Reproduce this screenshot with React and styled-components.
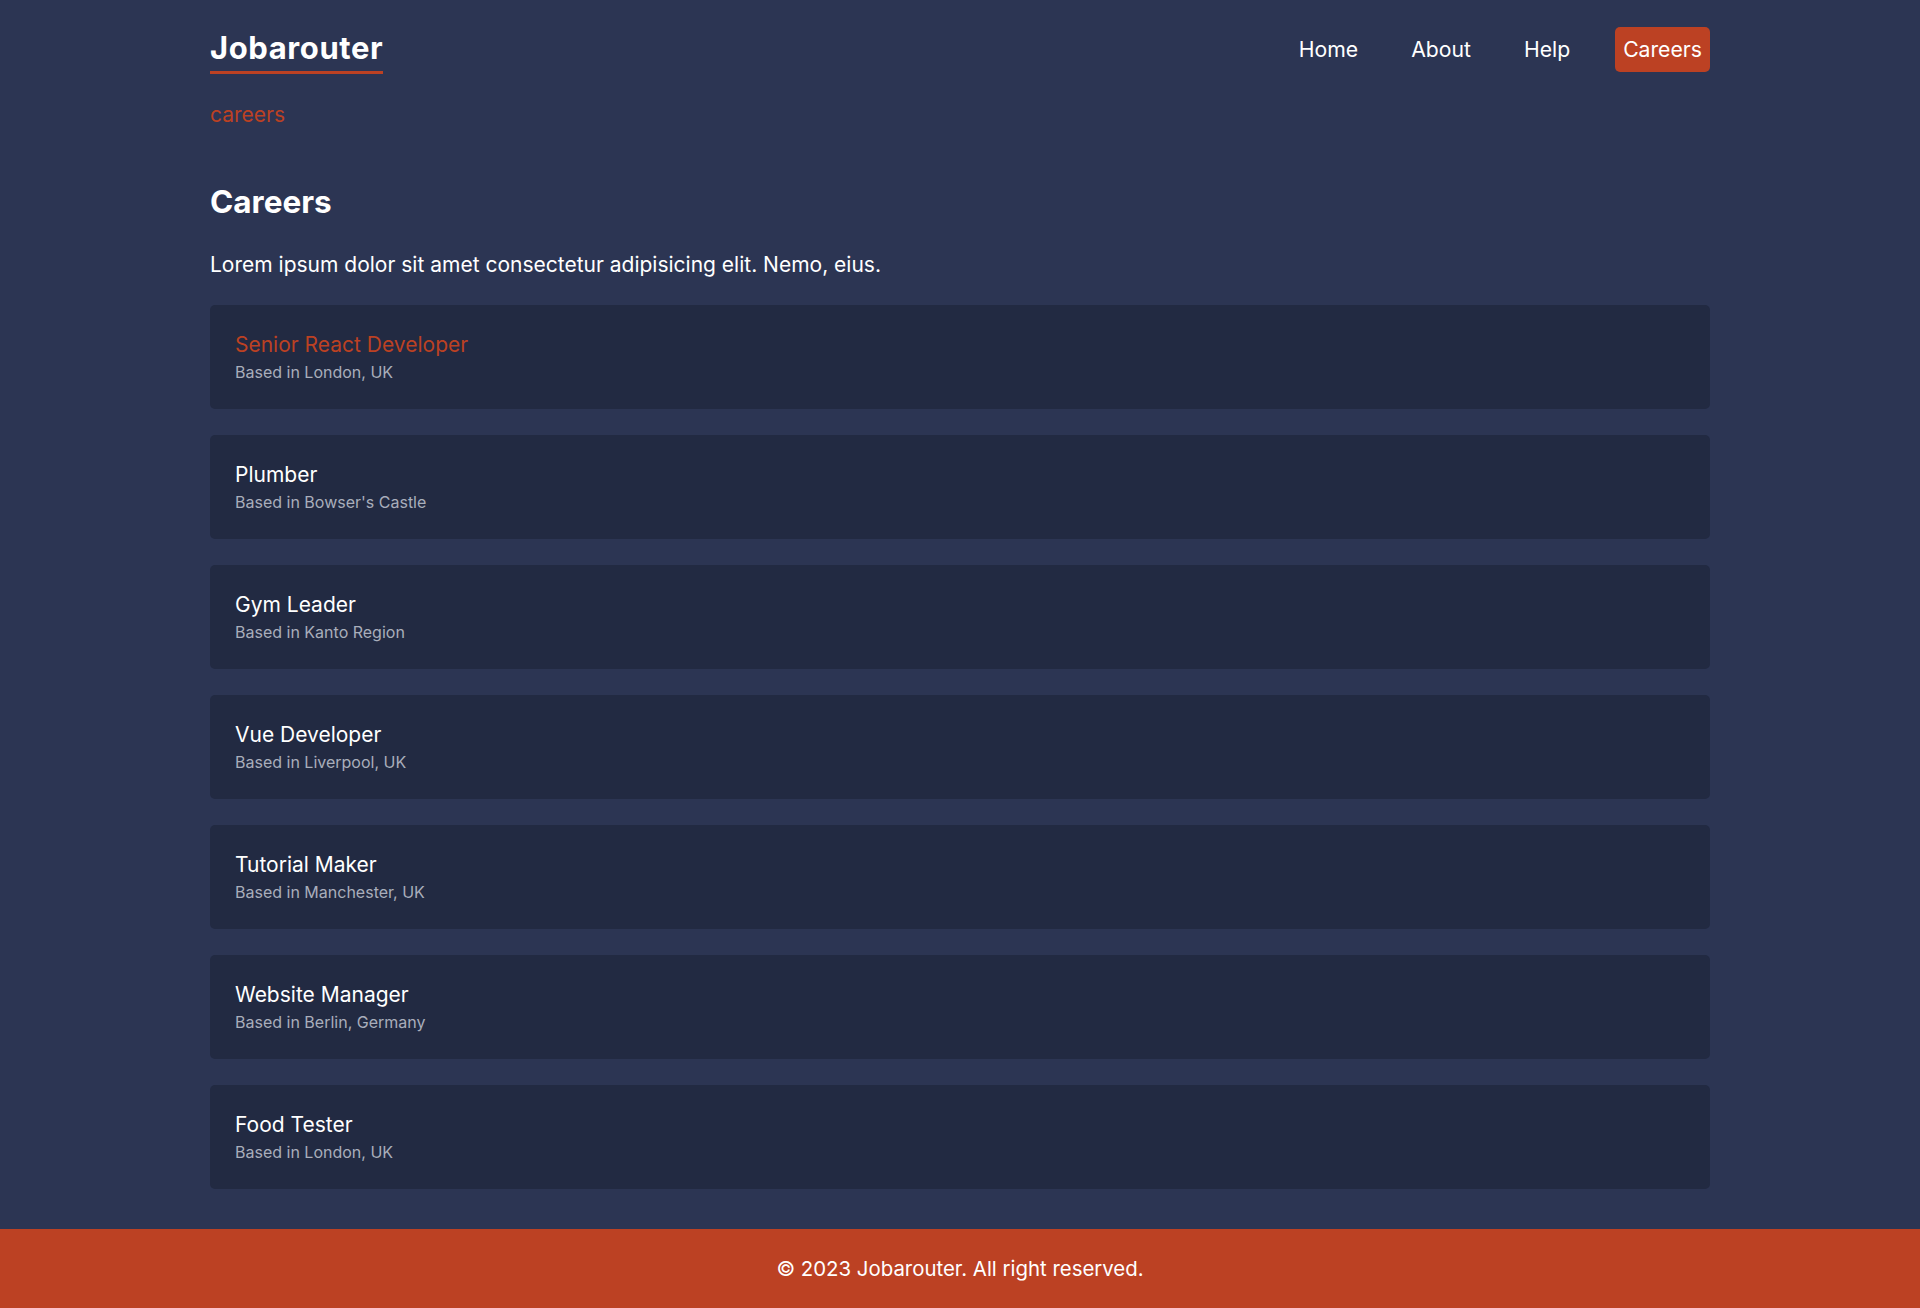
import React from "react";
import styled, { createGlobalStyle } from "styled-components";

const GlobalStyle = createGlobalStyle`
  * { box-sizing: border-box; }
  html, body { margin: 0; padding: 0; }
  body {
    background: #2c3553;
    color: #ffffff;
    font-family: "Inter", "Noto Sans", sans-serif;
  }
`;

const Page = styled.div`
  min-height: 100vh;
  display: flex;
  flex-direction: column;
`;

const Container = styled.div`
  width: 1500px;
  margin: 0 auto;
`;

const Header = styled.header`
  padding-top: 25px;
`;

const NavRow = styled.nav`
  display: flex;
  justify-content: space-between;
  align-items: center;
`;

const Logo = styled.h1`
  display: inline-block;
  margin: 0;
  font-size: 31px;
  line-height: 46px;
  font-weight: 700;
  letter-spacing: 0.6px;
  color: #ffffff;
  border-bottom: 3px solid #bc4123;
`;

const Links = styled.div`
  display: flex;
  align-items: center;
  gap: 37px;
`;

const NavLink = styled.a`
  display: block;
  padding: 7px 8px;
  font-size: 21.2px;
  line-height: 31px;
  color: #ffffff;
  text-decoration: none;
  border-radius: 5px;
  background: ${(p) => (p.$active ? "#bc4123" : "transparent")};
`;

const Breadcrumb = styled.div`
  margin-top: 26px;
  font-size: 21px;
  line-height: 30px;
  color: #bc4123;
`;

const Main = styled.main`
  flex: 1;
  padding-bottom: 40px;
`;

const Title = styled.h2`
  margin: 52px 0 0;
  font-size: 31.5px;
  line-height: 40px;
  font-weight: 700;
`;

const Intro = styled.p`
  margin: 28px 0 0;
  font-size: 21px;
  line-height: 30px;
`;

const JobList = styled.div`
  margin-top: 25px;
  display: flex;
  flex-direction: column;
  gap: 26px;
`;

const JobCard = styled.a`
  display: block;
  background: #222a42;
  border-radius: 5px;
  padding: 25px 25px;
  text-decoration: none;
`;

const JobTitle = styled.div`
  font-size: 21px;
  line-height: 30px;
  color: ${(p) => (p.$active ? "#bc4123" : "#ffffff")};
`;

const JobPlace = styled.div`
  font-size: 16px;
  line-height: 24px;
  color: #a9aebb;
`;

const Footer = styled.footer`
  background: #bc4123;
  padding: 25px 0 24px;
  text-align: center;
  font-size: 20.4px;
  line-height: 30px;
  color: #ffffff;
`;

const jobs = [
  { title: "Senior React Developer", place: "London, UK" },
  { title: "Plumber", place: "Bowser's Castle" },
  { title: "Gym Leader", place: "Kanto Region" },
  { title: "Vue Developer", place: "Liverpool, UK" },
  { title: "Tutorial Maker", place: "Manchester, UK" },
  { title: "Website Manager", place: "Berlin, Germany" },
  { title: "Food Tester", place: "London, UK" },
];

export default function App() {
  return (
    <Page>
      <GlobalStyle />
      <Header>
        <Container>
          <NavRow>
            <Logo>Jobarouter</Logo>
            <Links>
              <NavLink href="#">Home</NavLink>
              <NavLink href="#">About</NavLink>
              <NavLink href="#">Help</NavLink>
              <NavLink href="#" $active>Careers</NavLink>
            </Links>
          </NavRow>
          <Breadcrumb>careers</Breadcrumb>
        </Container>
      </Header>
      <Main>
        <Container>
          <Title>Careers</Title>
          <Intro>Lorem ipsum dolor sit amet consectetur adipisicing elit. Nemo, eius.</Intro>
          <JobList>
            {jobs.map((job, i) => (
              <JobCard href="#" key={job.title}>
                <JobTitle $active={i === 0}>{job.title}</JobTitle>
                <JobPlace>Based in {job.place}</JobPlace>
              </JobCard>
            ))}
          </JobList>
        </Container>
      </Main>
      <Footer>© 2023 Jobarouter. All right reserved.</Footer>
    </Page>
  );
}
